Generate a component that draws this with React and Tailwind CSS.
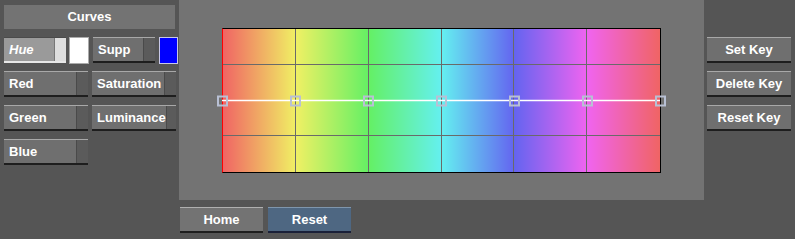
import React from 'react';

const font = { fontFamily: '"Liberation Sans", Arial, sans-serif' };

// bevelled button with a darker knob on the right
const SplitButton = ({ label, className = '' }) => (
  <div className={`flex h-[26px] w-[84px] border-t border-t-[#a8a8a8] border-b-2 border-b-[#1e1e1e] bg-[#6f6f6f] ${className}`}>
    <div className="flex flex-1 items-center pl-[5px] text-[13px] font-bold text-white">{label}</div>
    <div className="w-[12px] border-l border-l-[#4a4a4a] bg-[#5b5b5b]" />
  </div>
);

const KeyButton = ({ label }) => (
  <div className="flex h-[26px] w-[84px] items-center justify-center border-t border-t-[#a8a8a8] border-b-2 border-b-[#1e1e1e] bg-[#6f6f6f] text-[13px] font-bold text-white">
    {label}
  </div>
);

const points = [0, 73, 146, 219, 292, 365, 438];

const Graph = () => (
  <div
    className="relative ml-[43px] mt-[28px] h-[145px] w-[439px] border-l border-l-[#ff0000] border-t border-r border-b border-t-black border-r-black border-b-black"
    style={{
      background:
        'linear-gradient(to right, #f06464 0%, #f0f064 16.67%, #64f064 33.33%, #64f0f0 50%, #6464f0 66.67%, #f064f0 83.33%, #f06464 100%)',
    }}
  >
    <div className="grid h-full w-full grid-cols-6 grid-rows-4">
      {Array.from({ length: 24 }).map((_, i) => (
        <div
          key={i}
          className={`${i % 6 !== 5 ? 'border-r' : ''} ${i < 18 ? 'border-b' : ''} border-[#6a6a6a]`}
        />
      ))}
    </div>
    <svg className="absolute left-[-1px] top-[-1px] overflow-visible" width="439" height="145">
      <line x1="0" y1="72.5" x2="438" y2="72.5" stroke="#ffffff" strokeWidth="1.5" />
      {points.map((x) => (
        <rect key={x} x={x - 4} y={68.5} width="9" height="9" fill="none" stroke="#b8c0d4" strokeWidth="2" />
      ))}
    </svg>
  </div>
);

export default function App() {
  return (
    <div className="flex h-[239px] w-[795px] bg-[#555555]" style={font}>
      {/* left controls */}
      <div className="w-[179px] pl-[4px] pt-[5px]">
        <div className="flex h-[24px] w-[171px] items-center justify-center bg-[#737373] text-[13px] font-bold text-white">
          Curves
        </div>
        <div className="mt-[8px] flex flex-col gap-[8px]">
          <div className="flex h-[26px] items-stretch">
            <div className="flex h-[26px] w-[62px] border-t border-t-[#4a4a4a] border-b-2 border-b-[#e8e8e8] bg-[#9a9a9a]">
              <div className="flex flex-1 items-center pl-[5px] text-[13px] font-bold italic text-white">Hue</div>
              <div className="w-[12px] border-l border-l-[#777] bg-[#dedede]" />
            </div>
            <div className="ml-[3px] h-[27px] w-[20px] border border-[#aaaaaa] bg-white" />
            <div className="ml-[4px] flex h-[26px] w-[62px] border-t border-t-[#a8a8a8] border-b-2 border-b-[#1e1e1e] bg-[#6f6f6f]">
              <div className="flex flex-1 items-center pl-[5px] text-[13px] font-bold text-white">Supp</div>
              <div className="w-[12px] border-l border-l-[#4a4a4a] bg-[#5b5b5b]" />
            </div>
            <div className="ml-[4px] h-[27px] w-[19px] border border-[#c8c8e8] bg-[#0000ff]" />
          </div>
          <div className="flex gap-[4px]">
            <SplitButton label="Red" />
            <SplitButton label="Saturation" />
          </div>
          <div className="flex gap-[4px]">
            <SplitButton label="Green" />
            <SplitButton label="Luminance" />
          </div>
          <div className="flex gap-[4px]">
            <SplitButton label="Blue" />
          </div>
        </div>
      </div>

      {/* centre: graph panel and bottom buttons */}
      <div className="w-[525px]">
        <div className="h-[200px] overflow-hidden bg-[#737373] pt-[0.1px]">
          <Graph />
        </div>
        <div className="mt-[7px] flex gap-[5px] pl-[1px]">
          <div className="flex h-[26px] w-[83px] items-center justify-center border-t border-t-[#b0b0b0] border-b-2 border-b-[#1e1e1e] bg-[#737373] text-[13px] font-bold text-white">
            Home
          </div>
          <div className="flex h-[26px] w-[83px] items-center justify-center border-t border-t-[#7f96ad] border-b-2 border-b-[#1a2038] bg-[#4e6782] text-[13px] font-bold text-white">
            Reset
          </div>
        </div>
      </div>

      {/* right keys */}
      <div className="flex flex-col gap-[8px] pl-[3px] pt-[37px]">
        <KeyButton label="Set Key" />
        <KeyButton label="Delete Key" />
        <KeyButton label="Reset Key" />
      </div>
    </div>
  );
}
